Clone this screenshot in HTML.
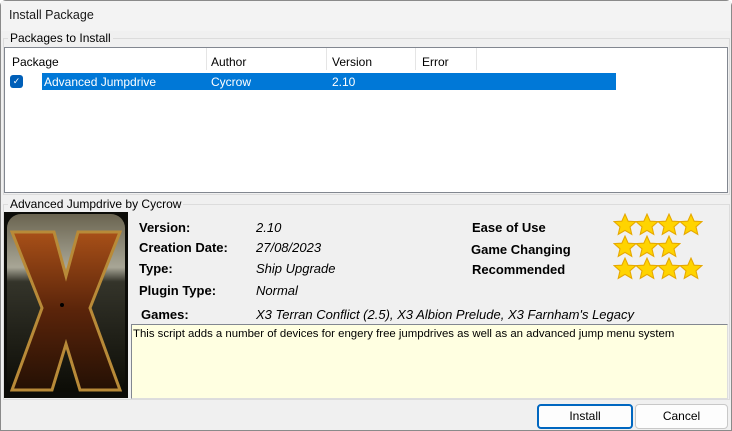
<!DOCTYPE html>
<html><head><style>
*{margin:0;padding:0;box-sizing:border-box}
body{width:732px;height:431px;background:#fff;font-family:"Liberation Sans",sans-serif;font-size:12px;color:#000;position:relative;overflow:hidden}
.a{position:absolute}
.lbl{font-weight:bold;font-size:13px}
.val{font-style:italic;font-size:13px}
</style></head><body>
<div class="a" style="left:0;top:0;width:732px;height:431px;background:#f0f0f0;border:1px solid #8a8a8a;border-radius:6px 6px 0 0"></div>
<div class="a" style="left:1px;top:1px;width:730px;height:30px;background:#f3f3f3"></div>
<div class="a" style="left:9px;top:8px;font-size:12.5px;color:#1a1a1a">Install Package</div>
<div class="a" style="left:3px;top:38px;width:727px;height:157px;border:1px solid #dcdcdc"></div>
<div class="a" style="left:8px;top:31px;background:#f0f0f0;padding:0 2px;font-size:12px">Packages to Install</div>
<div class="a" style="left:4px;top:47px;width:724px;height:146px;background:#fff;border:1px solid #828790"></div>
<div class="a" style="left:12px;top:55px">Package</div>
<div class="a" style="left:206px;top:48px;width:1px;height:22px;background:#e5e5e5"></div>
<div class="a" style="left:211px;top:55px">Author</div>
<div class="a" style="left:326px;top:48px;width:1px;height:22px;background:#e5e5e5"></div>
<div class="a" style="left:332px;top:55px">Version</div>
<div class="a" style="left:415px;top:48px;width:1px;height:22px;background:#e5e5e5"></div>
<div class="a" style="left:422px;top:55px">Error</div>
<div class="a" style="left:476px;top:48px;width:1px;height:22px;background:#e5e5e5"></div>
<div class="a" style="left:10px;top:75px;width:13px;height:13px;background:#005fb8;border-radius:3px;color:#fff;font-size:9px;text-align:center;line-height:13px">✓</div>
<div class="a" style="left:42px;top:73px;width:574px;height:17px;background:#0078d7"></div>
<div class="a" style="left:44px;top:75px;color:#fff">Advanced Jumpdrive</div>
<div class="a" style="left:211px;top:75px;color:#fff">Cycrow</div>
<div class="a" style="left:332px;top:75px;color:#fff">2.10</div>
<div class="a" style="left:3px;top:204px;width:727px;height:196px;border:1px solid #dcdcdc"></div>
<div class="a" style="left:8px;top:197px;background:#f0f0f0;padding:0 2px;font-size:12px">Advanced Jumpdrive by Cycrow</div>
<svg class="a" style="left:4px;top:212px" width="124" height="186" viewBox="0 0 124 186">
<defs><linearGradient id="bg" x1="0" y1="0" x2="0" y2="1"><stop offset="0" stop-color="#6a6450"/><stop offset=".3" stop-color="#a8a696"/><stop offset=".38" stop-color="#34342a"/><stop offset="1" stop-color="#0c0c06"/></linearGradient>
<linearGradient id="xg" x1="0" y1="0" x2="0" y2="1"><stop offset="0" stop-color="#a85018"/><stop offset=".5" stop-color="#5a240a"/><stop offset="1" stop-color="#241004"/></linearGradient></defs>
<rect width="124" height="186" fill="#0c0c08"/>
<rect x="3" y="2" width="118" height="178" rx="14" fill="url(#bg)"/>
<path d="M8 20 L50 20 L62 64 L74 20 L116 20 L86 96 L116 178 L76 178 L62 132 L48 178 L8 178 L38 96 Z" fill="url(#xg)" stroke="#b88a38" stroke-width="3"/>
<circle cx="58" cy="93" r="2" fill="#000"/>
</svg>
<div class="a lbl" style="left:139px;top:220px">Version:</div>
<div class="a val" style="left:256px;top:220px">2.10</div>
<div class="a lbl" style="left:139px;top:240px">Creation Date:</div>
<div class="a val" style="left:256px;top:240px">27/08/2023</div>
<div class="a lbl" style="left:139px;top:261px">Type:</div>
<div class="a val" style="left:256px;top:261px">Ship Upgrade</div>
<div class="a lbl" style="left:139px;top:283px">Plugin Type:</div>
<div class="a val" style="left:256px;top:283px">Normal</div>
<div class="a lbl" style="left:141px;top:307px">Games:</div>
<div class="a val" style="left:256px;top:307px">X3 Terran Conflict (2.5), X3 Albion Prelude, X3 Farnham's Legacy</div>
<div class="a lbl" style="left:472px;top:220px">Ease of Use</div>
<div class="a lbl" style="left:471px;top:242px">Game Changing</div>
<div class="a lbl" style="left:472px;top:262px">Recommended</div>
<svg class="a" style="left:612px;top:212px" width="100" height="72">
<defs><symbol id="s" viewBox="-11 -11 22 22"><polygon points="0,-10 2.9,-3.5 10,-3.1 4.6,1.7 6.2,8.6 0,4.9 -6.2,8.6 -4.6,1.7 -10,-3.1 -2.9,-3.5" fill="#ffd400" stroke="#e6a800" stroke-width="1"/></symbol></defs>
<use href="#s" x="1" y="1" width="24" height="24"/><use href="#s" x="23" y="1" width="24" height="24"/><use href="#s" x="45" y="1" width="24" height="24"/><use href="#s" x="67" y="1" width="24" height="24"/>
<use href="#s" x="1" y="23" width="24" height="24"/><use href="#s" x="23" y="23" width="24" height="24"/><use href="#s" x="45" y="23" width="24" height="24"/>
<use href="#s" x="1" y="45" width="24" height="24"/><use href="#s" x="23" y="45" width="24" height="24"/><use href="#s" x="45" y="45" width="24" height="24"/><use href="#s" x="67" y="45" width="24" height="24"/>
</svg>
<div class="a" style="left:131px;top:324px;width:597px;height:75px;background:#ffffe1;border:1px solid #828790;border-right-color:#ddd;border-bottom-color:#ddd"></div>
<div class="a" style="left:133px;top:328px;font-size:11.4px">This script adds a number of devices for engery free jumpdrives as well as an advanced jump menu system</div>
<div class="a" style="left:537px;top:404px;width:96px;height:25px;background:#fdfdfd;border:2px solid #0067c0;border-radius:4px;text-align:center;line-height:21px">Install</div>
<div class="a" style="left:635px;top:404px;width:93px;height:25px;background:#fdfdfd;border:1px solid #c8c8c8;border-radius:4px;text-align:center;line-height:23px">Cancel</div>
</body></html>
